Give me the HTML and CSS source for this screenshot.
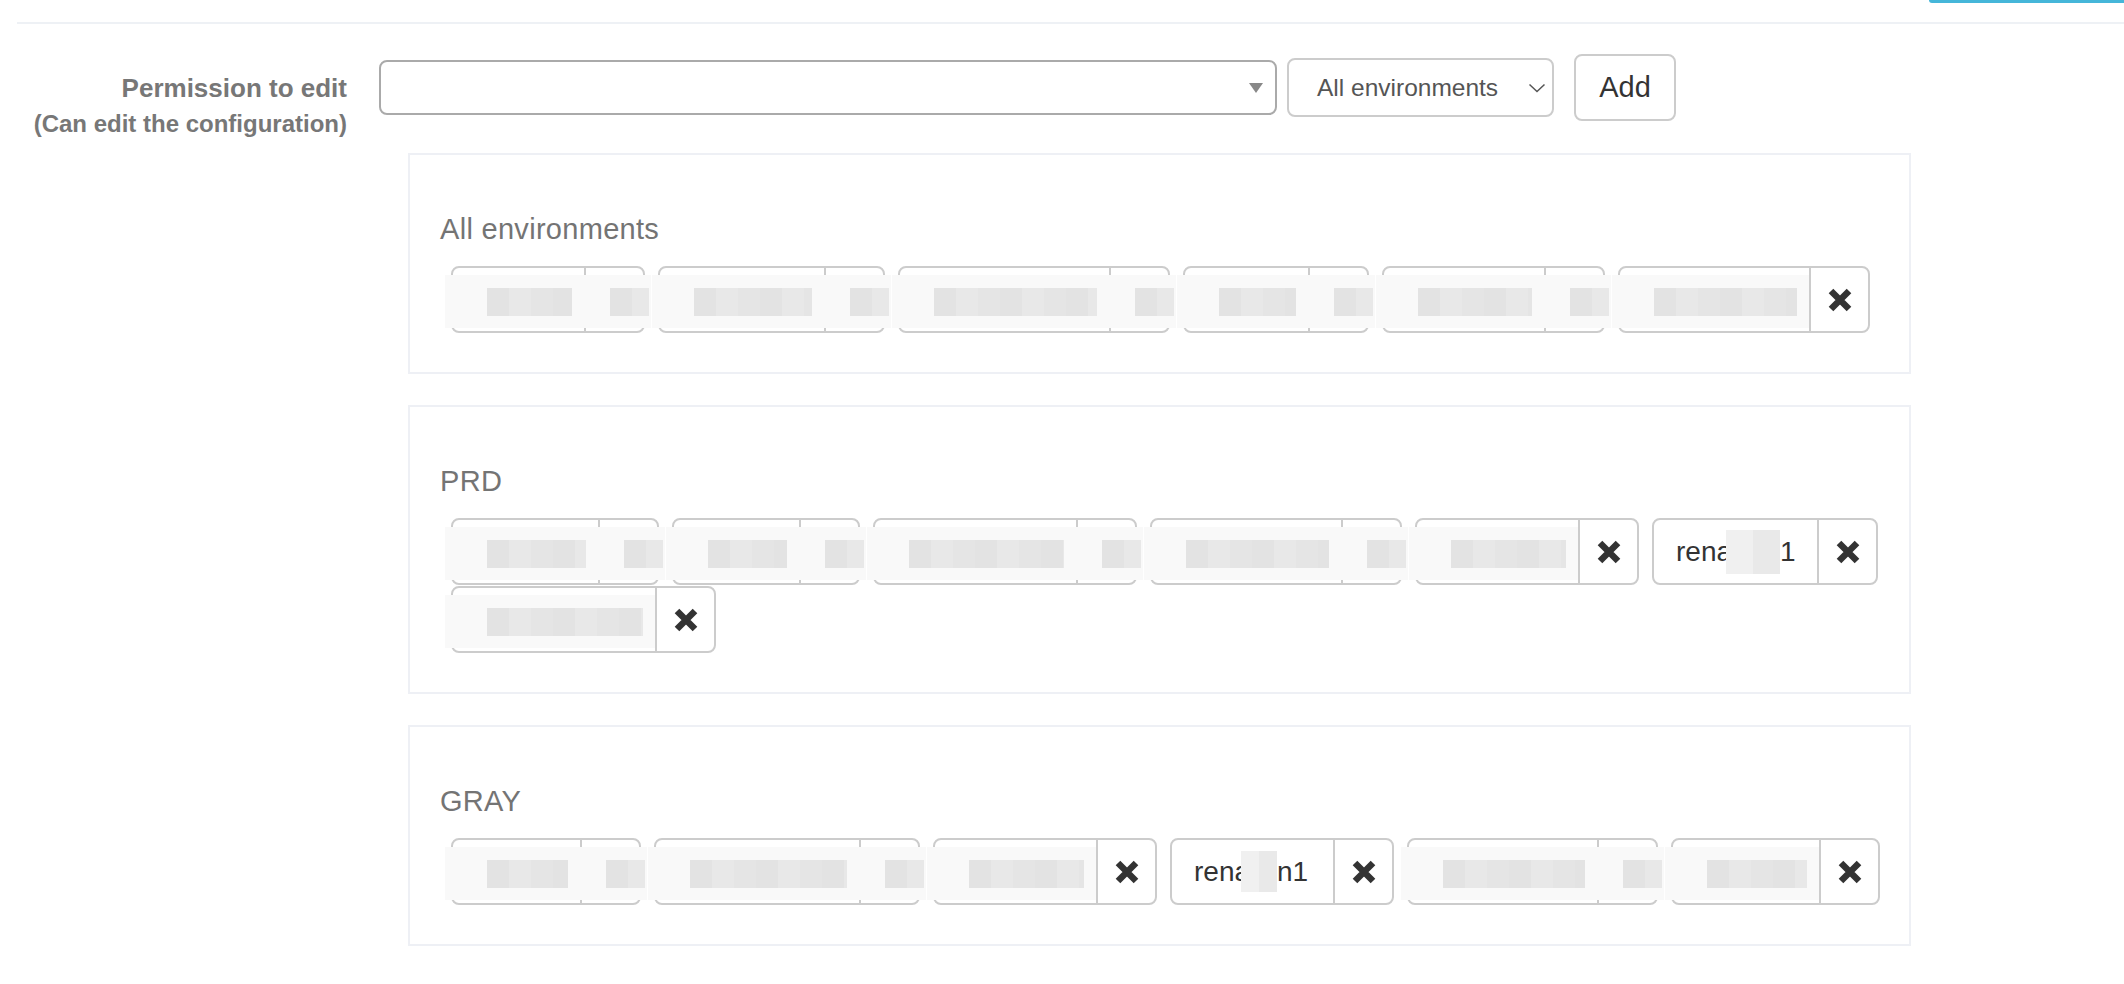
FILE: index.html
```html
<!DOCTYPE html>
<html lang="en">
<head>
<meta charset="utf-8">
<title>Permission to edit</title>
<link rel="stylesheet" href="styles.css">
</head>
<body>
<div class="topbar"><div class="teal"></div></div>

<div class="form-row">
  <div class="label">
    <div class="l1">Permission to edit</div>
    <div class="l2">(Can edit the configuration)</div>
  </div>
  <div class="controls">
    <div class="user-select"><span class="caret"></span></div>
    <div class="env-select">
      <span>All environments</span>
      <svg class="chev" width="18" height="10" viewBox="0 0 18 10"><polyline points="1.5,1.5 9,8.5 16.5,1.5" fill="none" stroke="#555" stroke-width="1.5"/></svg>
    </div>
    <button class="add">Add</button>
  </div>
</div>

<div class="panels">
  <div class="panel">
    <h5 class="env-title">All environments</h5>
    <div class="tags">
      <div class="tag"><div class="tag-text mt" style="width:131px"></div><div class="tag-x mx"></div></div>
      <div class="tag"><div class="tag-text mt" style="width:164px"></div><div class="tag-x mx"></div></div>
      <div class="tag"><div class="tag-text mt" style="width:209px"></div><div class="tag-x mx"></div></div>
      <div class="tag"><div class="tag-text mt" style="width:123px"></div><div class="tag-x mx"></div></div>
      <div class="tag"><div class="tag-text mt" style="width:160px"></div><div class="tag-x mx"></div></div>
      <div class="tag"><div class="tag-text mt" style="width:189px"></div><div class="tag-x"><svg class="xi" width="26" height="26" viewBox="0 0 26 26"><path d="M4 4L22 22M22 4L4 22" stroke="#333" stroke-width="6.5"/></svg></div></div>
    </div>
  </div>

  <div class="panel">
    <h5 class="env-title">PRD</h5>
    <div class="tags">
      <div class="tag"><div class="tag-text mt" style="width:145px"></div><div class="tag-x mx"></div></div>
      <div class="tag"><div class="tag-text mt" style="width:125px"></div><div class="tag-x mx"></div></div>
      <div class="tag"><div class="tag-text mt" style="width:201px"></div><div class="tag-x mx"></div></div>
      <div class="tag"><div class="tag-text mt" style="width:189px"></div><div class="tag-x mx"></div></div>
      <div class="tag"><div class="tag-text mt" style="width:161px"></div><div class="tag-x"><svg class="xi" width="26" height="26" viewBox="0 0 26 26"><path d="M4 4L22 22M22 4L4 22" stroke="#333" stroke-width="6.5"/></svg></div></div>
      <div class="tag"><div class="tag-text" style="width:163px">rena<span class="hide hide-wide"></span>1</div><div class="tag-x"><svg class="xi" width="26" height="26" viewBox="0 0 26 26"><path d="M4 4L22 22M22 4L4 22" stroke="#333" stroke-width="6.5"/></svg></div></div>
      <div class="tag"><div class="tag-text mt" style="width:202px"></div><div class="tag-x"><svg class="xi" width="26" height="26" viewBox="0 0 26 26"><path d="M4 4L22 22M22 4L4 22" stroke="#333" stroke-width="6.5"/></svg></div></div>
    </div>
  </div>

  <div class="panel">
    <h5 class="env-title">GRAY</h5>
    <div class="tags">
      <div class="tag"><div class="tag-text mt" style="width:127px"></div><div class="tag-x mx"></div></div>
      <div class="tag"><div class="tag-text mt" style="width:203px"></div><div class="tag-x mx"></div></div>
      <div class="tag"><div class="tag-text mt" style="width:161px"></div><div class="tag-x"><svg class="xi" width="26" height="26" viewBox="0 0 26 26"><path d="M4 4L22 22M22 4L4 22" stroke="#333" stroke-width="6.5"/></svg></div></div>
      <div class="tag"><div class="tag-text" style="width:161px">rena<span class="hide"></span>n1</div><div class="tag-x"><svg class="xi" width="26" height="26" viewBox="0 0 26 26"><path d="M4 4L22 22M22 4L4 22" stroke="#333" stroke-width="6.5"/></svg></div></div>
      <div class="tag"><div class="tag-text mt" style="width:188px"></div><div class="tag-x mx"></div></div>
      <div class="tag"><div class="tag-text mt" style="width:146px"></div><div class="tag-x"><svg class="xi" width="26" height="26" viewBox="0 0 26 26"><path d="M4 4L22 22M22 4L4 22" stroke="#333" stroke-width="6.5"/></svg></div></div>
    </div>
  </div>
</div>
</body>
</html>
```

FILE: styles.css
```css
html, body {
  margin: 0;
  padding: 0;
  background: #fff;
}

body {
  font-family: "Liberation Sans", Arial, sans-serif;
  color: #333;
}

.topbar {
  height: 22px;
  margin-left: 17px;
  border-bottom: 2px solid #eef1f5;
  display: flex;
  justify-content: flex-end;
  align-items: flex-start;
}

.teal {
  width: 195px;
  height: 3px;
  background: #45b6d9;
  border-bottom-left-radius: 3px;
}

.form-row {
  display: flex;
  align-items: flex-start;
  margin-top: 30px;
}

.label {
  width: 347px;
  text-align: right;
  padding-top: 16px;
  color: #777;
  font-weight: bold;
}

.l1 {
  font-size: 26px;
  line-height: 36px;
}

.l2 {
  font-size: 24px;
  line-height: 36px;
}

.controls {
  margin-left: 32px;
  height: 67px;
  display: flex;
  align-items: center;
}

.user-select {
  box-sizing: border-box;
  width: 898px;
  height: 55px;
  border: 2px solid #aaa;
  border-radius: 8px;
  display: flex;
  justify-content: flex-end;
  align-items: center;
  padding-right: 12px;
}

.caret {
  width: 0;
  height: 0;
  border-left: 7.5px solid transparent;
  border-right: 7.5px solid transparent;
  border-top: 10px solid #888;
}

.env-select {
  box-sizing: border-box;
  margin-left: 10px;
  width: 267px;
  height: 59px;
  border: 2px solid #ccc;
  border-radius: 8px;
  display: flex;
  align-items: center;
  justify-content: space-between;
  padding-left: 28px;
  padding-right: 6px;
  font-size: 24.5px;
  color: #555;
}

.chev {
  display: block;
}

.add {
  box-sizing: border-box;
  margin-left: 20px;
  width: 102px;
  height: 67px;
  padding: 0;
  border: 2px solid #ccc;
  border-radius: 8px;
  background: #fff;
  color: #333;
  font-family: "Liberation Sans", Arial, sans-serif;
  font-size: 29px;
}

.panels {
  margin-left: 408px;
  width: 1503px;
  margin-top: 11px;
}

.panel {
  box-sizing: border-box;
  border: 2px solid #eef0f5;
  padding: 0 26px 39px 30px;
  margin-bottom: 31px;
}

.env-title {
  margin: 58px 0 21px;
  font-size: 29px;
  letter-spacing: 0.3px;
  line-height: 32px;
  font-weight: normal;
  color: #747474;
}

.tags {
  margin-left: 11px;
  display: flex;
  flex-wrap: wrap;
  column-gap: 13px;
  row-gap: 1px;
}

.tag {
  box-sizing: border-box;
  height: 67px;
  border: 2px solid #ccc;
  border-radius: 8px;
  display: flex;
  background: #fff;
}

.tag-text {
  position: relative;
  box-sizing: border-box;
  padding-left: 22px;
  display: flex;
  align-items: center;
  font-size: 28px;
  color: #333;
  white-space: nowrap;
}

.tag-x {
  position: relative;
  box-sizing: border-box;
  width: 59px;
  border-left: 2px solid #ccc;
  display: flex;
  align-items: center;
  justify-content: center;
}

.xi {
  display: block;
}

/* redaction mosaic */
.mt::before,
.mx::before {
  content: "";
  position: absolute;
  top: 7px;
  bottom: 3px;
  background: #f9f9f9;
}

.mt::before {
  left: -8px;
  right: -2px;
}

.mx::before {
  left: -2px;
  right: -8px;
}

.mt::after,
.mx::after {
  content: "";
  position: absolute;
  top: 20px;
  height: 28px;
  background: repeating-linear-gradient(90deg, #e3e3e3 0 22px, #e8e8e8 22px 44px, #e5e5e5 44px 66px);
}

.mt::after {
  left: 34px;
  right: 12px;
}

.mx::after {
  left: 24px;
  right: -6px;
}

.hide {
  display: inline-block;
  width: 36px;
  height: 41px;
  margin-left: -9px;
  background: linear-gradient(90deg, #f0f0f0 0 50%, #e9e9e9 50% 100%);
}

.hide-wide {
  width: 54px;
  height: 44px;
  margin-left: -6px;
}
```
